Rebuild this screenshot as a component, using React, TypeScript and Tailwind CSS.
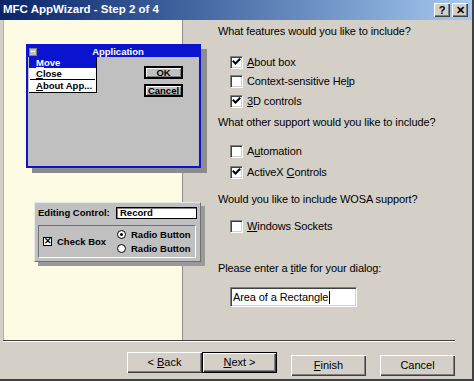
import React from 'react';

const U = ({ children }: { children: React.ReactNode }) => <span className="underline underline-offset-[1px]">{children}</span>;

const CheckBox = ({ checked }: { checked?: boolean }) => (
  <span className="inline-flex h-[13px] w-[13px] shrink-0 items-center justify-center border border-t-[#808080] border-l-[#808080] border-b-white border-r-white bg-white shadow-[inset_1px_1px_0_#404040,inset_-1px_-1px_0_#d4d0c8]">
    {checked && (
      <svg width="9" height="9" viewBox="0 0 9 9">
        <path d="M1.5 3.5 L3.5 5.5 L7.5 1.5" fill="none" stroke="#000" strokeWidth="2" strokeLinecap="square" />
      </svg>
    )}
  </span>
);

const Option = ({ checked, mt, children }: { checked?: boolean; mt: string; children: React.ReactNode }) => (
  <div className={`flex h-[14px] items-center gap-[4px] pl-[12px] ${mt}`}>
    <CheckBox checked={checked} />
    <span className="leading-[14px]">{children}</span>
  </div>
);

const WinButton = ({ children, isDefault }: { children: React.ReactNode; isDefault?: boolean }) => (
  <button
    type="button"
    className={`h-[21px] w-[75px] bg-[#d4d0c8] text-[11px] text-black ${
      isDefault
        ? 'border border-black shadow-[inset_1px_1px_0_#fff,inset_-1px_-1px_0_#404040,inset_-2px_-2px_0_#808080]'
        : 'shadow-[inset_1px_1px_0_#fff,inset_-1px_-1px_0_#404040,inset_-2px_-2px_0_#808080]'
    }`}
  >
    {children}
  </button>
);

const TitleButton = ({ children }: { children: React.ReactNode }) => (
  <span className="flex h-[14px] w-[16px] items-center justify-center bg-[#d4d0c8] text-[11px] font-bold leading-none text-black shadow-[inset_1px_1px_0_#fff,inset_-1px_-1px_0_#404040,inset_-2px_-2px_0_#808080]">
    {children}
  </span>
);

const RetroButton = ({ children }: { children: React.ReactNode }) => (
  <span className="flex h-[13px] w-[39px] items-center justify-center border-2 border-black bg-[#c0c0c0] text-[9.5px] font-bold leading-none shadow-[inset_1px_1px_0_#fff,inset_-1px_-1px_0_#808080]">
    {children}
  </span>
);

const Radio = ({ on }: { on?: boolean }) => (
  <span className="flex h-[9px] w-[9px] items-center justify-center rounded-full border border-black bg-white">
    {on && <span className="h-[3px] w-[3px] rounded-full bg-black" />}
  </span>
);

const AppIllustration = () => (
  <div className="relative ml-[22px] mt-[24px] h-[124px] w-[175px] border-2 border-[#0a14d0] bg-[#c0c0c0] shadow-[6px_5px_0_#8c8c8c]">
    <div className="flex h-[11px] items-center bg-[#0a14d0]">
      <span className="ml-[1px] flex h-[8px] w-[8px] items-center justify-center bg-[#c0c0c0] border border-[#808080]">
        <span className="h-[1px] w-[4px] bg-white" />
      </span>
      <span className="flex-1 text-center text-[9.5px] font-bold leading-none text-white">Application</span>
    </div>
    <div className="flex flex-col items-end gap-[5px] pr-[16px] pt-[9px]">
      <RetroButton>OK</RetroButton>
      <RetroButton>Cancel</RetroButton>
    </div>
    <div className="absolute left-[1px] top-[11px] w-[68px] border-r border-b border-black bg-white text-[9.5px] font-bold leading-none">
      <div className="flex h-[11px] items-center bg-[#0a14d0] pl-[7px] text-white">
        <U>M</U>ove
      </div>
      <div className="flex h-[11px] items-center pl-[7px]">
        <U>C</U>lose
      </div>
      <div className="mx-[1px] h-[1px] bg-black" />
      <div className="flex h-[12px] items-center pl-[7px]">
        <U>A</U>bout App...
      </div>
    </div>
  </div>
);

const EditingIllustration = () => (
  <div className="ml-[30px] mt-[34px] h-[60px] w-[167px] border border-t-[#e8e8e8] border-l-[#e8e8e8] border-b-[#707070] border-r-[#707070] bg-[#c0c0c0] text-[9.5px] font-bold leading-none shadow-[4px_4px_0_#9a9a9a]">
    <div className="flex items-center pl-[3px] pt-[4px]">
      <span className="w-[78px]">Editing Control:</span>
      <span className="flex h-[12px] w-[81px] items-center border border-black bg-white pl-[3px] shadow-[inset_1px_1px_0_#808080]">Record</span>
    </div>
    <div className="ml-[3px] mt-[6px] h-[33px] w-[158px] border border-t-[#707070] border-l-[#707070] border-b-white border-r-white pl-[4px] pt-[4px]">
      <div className="flex">
        <div className="flex w-[74px] items-center gap-[5px]">
          <span className="flex h-[9px] w-[9px] items-center justify-center border border-black bg-white text-[9px] leading-none">✕</span>
          <span>Check Box</span>
        </div>
        <div className="flex flex-col gap-[4px]">
          <div className="flex items-center gap-[5px]">
            <Radio on />
            <span>Radio Button</span>
          </div>
          <div className="flex items-center gap-[5px]">
            <Radio />
            <span>Radio Button</span>
          </div>
        </div>
      </div>
    </div>
  </div>
);

export default function App() {
  return (
    <div className="h-[381px] w-[474px] overflow-hidden border-r-2 border-b-2 border-r-[#404040] border-b-[#404040] bg-[#d4d0c8] font-['Liberation_Sans',Arial,sans-serif] text-black">
      <div className="flex h-[20px] items-center justify-between bg-gradient-to-r from-[#0a246a] to-[#a6caf0] pl-[3px] pr-[4px]">
        <span className="text-[11.5px] font-bold text-white">MFC AppWizard - Step 2 of 4</span>
        <div className="flex gap-[2px]">
          <TitleButton>?</TitleButton>
          <TitleButton>✕</TitleButton>
        </div>
      </div>

      <div className="flex h-[320px]">
        <div className="relative z-10 ml-[3px] h-full w-[180px] border-l border-r border-l-[#b0b0b0] border-r-[#909090] bg-[#fdfbe4]">
          <AppIllustration />
          <EditingIllustration />
        </div>

        <div className="ml-[35px] flex flex-col text-[11px] tracking-[-0.1px]">
          <div className="mt-[4px] h-[14px] leading-[14px]">What features would you like to include?</div>
          <Option checked mt="mt-[17px]"><U>A</U>bout box</Option>
          <Option mt="mt-[5px]">Context-sensitive He<U>l</U>p</Option>
          <Option checked mt="mt-[6px]"><U>3</U>D controls</Option>
          <div className="mt-[7px] h-[14px] leading-[14px]">What other support would you like to include?</div>
          <Option mt="mt-[15px]">A<U>u</U>tomation</Option>
          <Option checked mt="mt-[7px]">ActiveX <U>C</U>ontrols</Option>
          <div className="mt-[13px] h-[14px] leading-[14px]">Would you like to include WOSA support?</div>
          <Option mt="mt-[13px]"><U>W</U>indows Sockets</Option>
          <div className="mt-[28px] h-[14px] leading-[14px]">Please enter a <U>t</U>itle for your dialog:</div>
          <div className="ml-[12px] mt-[12px] flex h-[20px] w-[127px] items-center border border-t-[#808080] border-l-[#808080] border-b-white border-r-white bg-white pl-[2px] shadow-[inset_1px_1px_0_#404040,inset_-1px_-1px_0_#d4d0c8]">
            <span>Area of a Rectangle</span>
            <span className="ml-[1px] h-[13px] w-[1px] bg-black" />
          </div>
        </div>
      </div>

      <div className="ml-[3px] w-[452px] border-t border-b border-t-[#404040] border-b-white" />

      <div className="mt-[10px] flex pl-[127px]">
        <WinButton>&lt; <U>B</U>ack</WinButton>
        <WinButton isDefault><U>N</U>ext &gt;</WinButton>
        <div className="ml-[14px]">
          <WinButton><U>F</U>inish</WinButton>
        </div>
        <div className="ml-[14px]">
          <WinButton>Cancel</WinButton>
        </div>
      </div>
    </div>
  );
}
